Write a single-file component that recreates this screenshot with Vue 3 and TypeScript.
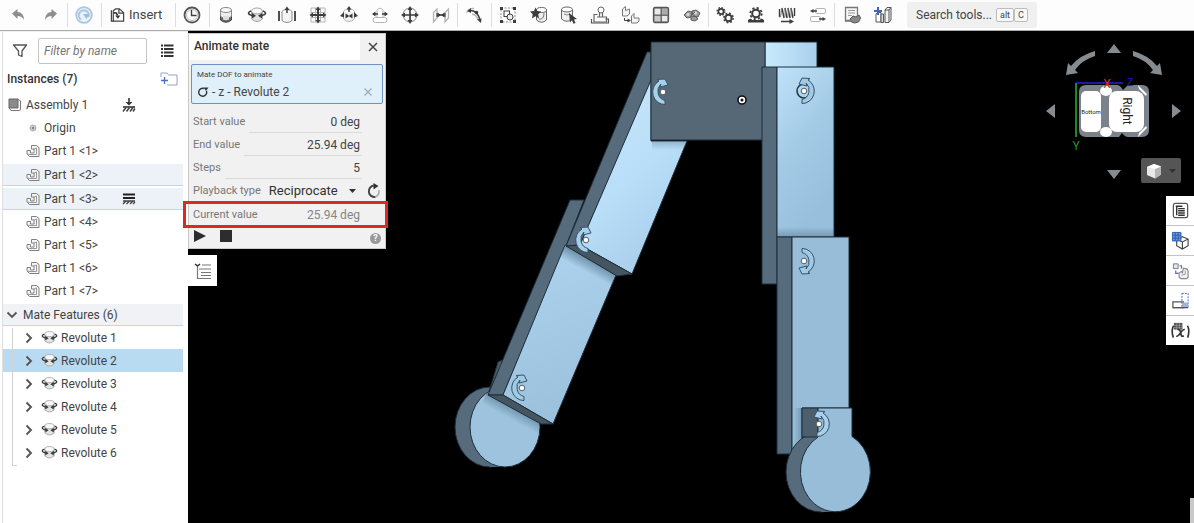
<script setup lang="ts">
import { ref } from 'vue'

interface Tool {
  label: string
  art: string
}
interface ToolGroup {
  kind: string
  tools: Tool[]
}

const D = '#3c3c3c'
const G = '#8b8b8b'
const L = '#b4b4b4'

const revoluteArt = `<path d="M4.500 6v8q5.500 5 11 0V6" fill="#e2e2e2" stroke="#a4a4a4"/><ellipse cx="10" cy="6" rx="5.500" ry="3" fill="#fafafa" stroke="#a4a4a4"/><path d="M6 10.500Q1.500 10 1.500 8Q2 6.500 4 6M14 10.500Q18.500 10 18.500 8Q18 6.500 16 6" fill="none" stroke="${D}" stroke-width="1.500"/><path d="M5 8L9 10.800L5 13.500zM15 8L11 10.800L15 13.500z" fill="${D}"/>`

const toolGroups: ToolGroup[] = [
  {
    kind: 'clock',
    tools: [
      { label: 'Named positions', art: `<circle cx="10" cy="10" r="7.500" fill="#fff" stroke="#555" stroke-width="1.800"/><circle cx="10" cy="10" r="5.500" fill="none" stroke="#bbb"/><path d="M9.500 5v5.500h5" fill="none" stroke="${D}" stroke-width="1.400"/>` },
    ],
  },
  {
    kind: 'mates',
    tools: [
      { label: 'Fastened mate', art: `<path d="M4.500 9v6q5.500 4.500 11 0V9" fill="#666" stroke="#444"/><path d="M4.500 5v6q1 1.500 2.500 1.800q3 1.200 6 0q2-.5 2.500-1.800V5" fill="#eee" stroke="#888"/><path d="M7 11v3.500q3 1.500 6 0V11" fill="#ddd"/><ellipse cx="10" cy="5" rx="5.500" ry="2.500" fill="#fafafa" stroke="#888"/>` },
      { label: 'Revolute mate', art: revoluteArt },
      { label: 'Slider mate', art: `<ellipse cx="10" cy="7" rx="5" ry="2.300" fill="#fff" stroke="${G}"/><path d="M5 7v8.500q5 4 10 0V7" fill="#f4f4f4" stroke="${G}"/><path d="M2 6v10M18 6v10" stroke="${D}" stroke-width="1.800"/><path d="M10 8V3" stroke="${D}" stroke-width="1.500"/><path d="M7.500 5L10 1.500L12.500 5z" fill="${D}"/>` },
      { label: 'Planar mate', art: `<path d="M3 3h14v14H3zM3 7.500h14M3 12.500h14M7.500 3v14M12.500 3v14" fill="none" stroke="${L}"/><path d="M10 4v12M4 10h12" stroke="${D}" stroke-width="2"/><path d="M10 1.500L7.500 5h5zM10 18.500L7.500 15h5zM1.500 10L5 7.500v5zM18.500 10L15 7.500v5z" fill="${D}"/>` },
      { label: 'Cylindrical mate', art: `<ellipse cx="10" cy="7" rx="5.500" ry="3" fill="#fff" stroke="${L}"/><path d="M4.500 7v7q5.500 5 11 0V7" fill="#f2f2f2" stroke="${L}"/><path d="M10 7V3" stroke="${D}" fill="none" stroke-width="1.500"/><path d="M10 1L7.500 4.500h5zM1 11L5 7v5.500zM19 11L15 7v5.500z" fill="${D}"/><path d="M10.500 11L6.500 8.500v5zM9.500 11l4-2.500v5z" fill="${D}"/>` },
      { label: 'Pin slot mate', art: `<path d="M7 13V5q3-3.500 6 0v8" fill="#fff" stroke="${L}"/><rect x="3" y="12.500" width="14" height="5" rx="2.500" fill="none" stroke="${L}"/><path d="M3 9h5M12 9h5" stroke="${D}" stroke-width="1.500"/><path d="M2 9l3.500-2.500v5zM18 9l-3.500-2.500v5z" fill="${D}"/>` },
      { label: 'Ball mate', art: `<circle cx="10" cy="10" r="7" fill="#f7f7f7" stroke="${G}"/><path d="M10 3.500v13M3.500 10h13" stroke="${D}" stroke-width="1.700"/><path d="M10 1L7.500 5h5zM10 19l-2.500-4h5zM1 10l4-2.500v5zM19 10l-4-2.500v5z" fill="${D}"/>` },
      { label: 'Parallel mate', art: `<path d="M2.500 7.500L6 4v9l-3.500 4zM17.500 4L14 7.500V17l3.500-4z" fill="#fafafa" stroke="${L}" stroke-width="1.300"/><path d="M6 10h8" stroke="${D}" stroke-width="1.500"/><path d="M10 10L6.500 7.500v5zM10 10l3.500-2.500v5z" fill="${D}"/><path d="M6 8v4M14 8v4" stroke="${D}"/>` },
    ],
  },
  {
    kind: 'tangent',
    tools: [
      { label: 'Tangent mate', art: `<path d="M2.500 8Q5 3 10 3.500M8 9q5 1 6 6" fill="none" stroke="${L}" stroke-width="1.300"/><path d="M5 5.500q8-1 11 9" fill="none" stroke="${D}" stroke-width="1.500"/><path d="M3 6l4-3v5zM17 18l-4-3.500 4.500-1z" fill="${D}"/><circle cx="12.500" cy="7.500" r="1.800" fill="${D}"/>` },
    ],
  },
  {
    kind: 'assembly',
    tools: [
      { label: 'Group', art: `<rect x="3" y="3" width="14" height="14" fill="none" stroke="${G}" stroke-dasharray="2 1.500"/><path d="M2 2h3v3H2zM15 2h3v3h-3zM2 15h3v3H2zM15 15h3v3h-3z" fill="${D}"/><rect x="6" y="6" width="5.500" height="5.500" fill="#fff" stroke="${D}"/><circle cx="12" cy="12" r="3" fill="#eee" stroke="${D}"/>` },
      { label: 'Mate connector', art: `<path d="M7.500 5v10q5 4.500 10 0V5" fill="#eee" stroke="#666"/><ellipse cx="12.500" cy="5" rx="5" ry="2.500" fill="#fff" stroke="#666"/><path d="M10 14q5 1 5-6" fill="none" stroke="#777"/><path d="M6.500 2.500l1.700 3.500 4 .5-3 2.700.8 4.300-3.500-2.200L3 13.500l.7-4.300L1 6.500 5 6z" fill="${D}"/>` },
      { label: 'Replicate', art: `<path d="M2.500 4.500v9.500q5.500 4.500 11 0V4.500" fill="#f2f2f2" stroke="#666"/><ellipse cx="8" cy="4.500" rx="5.500" ry="2.500" fill="#fff" stroke="#666"/><path d="M5 9q3 2 6 0" fill="none" stroke="#888"/><path d="M10 8l8 6-3 .5 1.500 3.500-2 .8-1.500-3.500L11 17.500z" fill="${D}"/>` },
      { label: 'Snap mode', art: `<circle cx="11" cy="5" r="3" fill="#fff" stroke="#666"/><path d="M9.500 8v4M12.500 8v4M7 12h9.500v5H4V9.500h3.500" fill="none" stroke="#666" stroke-width="1.200"/><path d="M1.500 14v4h17v-4h-3" fill="none" stroke="#555" stroke-width="1.200"/>` },
      { label: 'Move part', art: `<path d="M1.500 4l3-2.500v4l4-1.500v5l-2.500 2H1.500z" fill="#f5f5f5" stroke="#777" stroke-linejoin="round"/><path d="M10.500 11l2.500-2.500v4.500H18v3l-2 2h-5.500z" fill="#f5f5f5" stroke="#777" stroke-linejoin="round"/><path d="M3.500 13v2.500H7" fill="none" stroke="${D}"/><path d="M10 15.500l-3.500-2v4z" fill="${D}"/>` },
      { label: 'Display states', art: `<rect x="2.500" y="2.500" width="15" height="15" rx="1.500" fill="#aaa" stroke="#555" stroke-width="1.300"/><path d="M4 4h5.500v5.500H4zM11 11h5v5h-5z" fill="#e9e9e9"/><path d="M4 11h5.500v5H4z" fill="#c9c9c9"/><path d="M10.200 3v14M3 10.200h14" stroke="#555"/>` },
      { label: 'Pattern', art: `<path d="M2 10l4-4 4 1-1 5-4 1zM10 6l4-1 4 3-2 4-5-1zM9 12l4-1 3 3-3 2-4-1z" fill="#9b9b9b" stroke="#5e5e5e"/><circle cx="6" cy="9.500" r="1.500" fill="#ddd"/><circle cx="13.500" cy="8" r="1.500" fill="#ddd"/><path d="M7 13l6-6" stroke="#666"/>` },
    ],
  },
  {
    kind: 'relations',
    tools: [
      { label: 'Gear relation', art: `<circle cx="6" cy="6.500" r="2.600" fill="#fff" stroke="${D}" stroke-width="1.700"/><circle cx="6" cy="6.500" r="3.900" fill="none" stroke="${D}" stroke-width="1.300" stroke-dasharray="1.500 1.560"/><circle cx="13.500" cy="13" r="3.200" fill="#fff" stroke="${D}" stroke-width="2"/><circle cx="13.500" cy="13" r="4.700" fill="none" stroke="${D}" stroke-width="1.500" stroke-dasharray="1.800 1.890"/>` },
      { label: 'Rack and pinion', art: `<circle cx="10" cy="8.500" r="3.800" fill="#fff" stroke="${D}" stroke-width="2"/><circle cx="10" cy="8.500" r="5.700" fill="none" stroke="${D}" stroke-width="1.800" stroke-dasharray="2.200 2.270"/><path d="M2 17.500v-2.500l2.500-1.500 2 1.500h7l2-1.500 2.500 1.500v2.500z" fill="${D}"/>` },
      { label: 'Screw relation', art: `<path d="M2.500 4v8M5 3l2 10M8 3l2 10M11 3l2 10M14 3l2 10M17.500 3v8" stroke="${D}" stroke-width="1.400"/><path d="M2.500 12q1 2 2.500-9M7 13q1.500 0 1-10M10 13q1.500 0 1-10M13 13q1.500 0 1-10" fill="none" stroke="#777"/><path d="M4 16.500h9" stroke="${D}" stroke-width="1.500"/><path d="M17 16.500L12.500 14v5z" fill="${D}"/>` },
      { label: 'Linear relation', art: `<rect x="7.500" y="3.500" width="10" height="5" rx="1.500" fill="#fff" stroke="${L}"/><rect x="2.500" y="11.500" width="10" height="5" rx="1.500" fill="#fff" stroke="${L}"/><path d="M4 6h5M11 14h5" stroke="${D}" stroke-width="1.400"/><path d="M2 6l3.500-2v4zM18 14l-3.500-2v4z" fill="${D}"/>` },
    ],
  },
  {
    kind: 'last',
    tools: [
      { label: 'Bill of materials', art: `<path d="M3.500 2.500h12v13h-12z" fill="#f6f6f6" stroke="#777" stroke-width="1.300"/><path d="M6 5.500h7M6 8h7M6 10.500h4" stroke="#999"/><path d="M8 14l3-3 3 1 3-2 1.500 3-2 4-4 1-3-1z" fill="#888" stroke="#555"/><path d="M3 16h6" stroke="#777" stroke-width="1.500"/>` },
      { label: 'Exploded view', art: `<path d="M3 9l1.500-1.500H8V17H3z" fill="#fff" stroke="#555"/><path d="M8 9h2.500v8.500H8z" fill="#ddd" stroke="#555"/><path d="M12 5l2-2.500h4V15l-2 2.500h-4zM12 5h4v12M16 5l2-2.500" fill="#f4f4f4" stroke="#555"/><path d="M5 2v8M1 6h8" stroke="#3f67b5" stroke-width="2"/>` },
    ],
  },
]

const parts = [
  { name: 'Part 1 <1>' },
  { name: 'Part 1 <2>', hot: true },
  { name: 'Part 1 <3>', hot: true, fixed: true },
  { name: 'Part 1 <4>' },
  { name: 'Part 1 <5>' },
  { name: 'Part 1 <6>' },
  { name: 'Part 1 <7>' },
]
const mates = ['Revolute 1', 'Revolute 2', 'Revolute 3', 'Revolute 4', 'Revolute 5', 'Revolute 6']
const selectedMate = ref('Revolute 2')

const filterText = ref('')
const startValue = ref('0 deg')
const endValue = ref('25.94 deg')
const steps = ref('5')
const playback = ref('Reciprocate')
const currentValue = ref('25.94 deg')

const sideTabs: Tool[] = [
  { label: 'Configurations', art: `<rect x="2.500" y="2.500" width="15" height="15" rx="2" fill="#fff" stroke="#555" stroke-width="1.300"/><path d="M5 5.500h7M7.500 8h7M7.500 10.300h7M7.500 12.600h7M7.500 15h7M6 6v9" stroke="#333" stroke-width="1.500"/>` },
  { label: 'Appearance', art: `<path d="M12 6l6 2.500v7L12 19l-6-3.500v-7zM6 8.500l6 3 6-3M12 11.500V19" fill="#fff" stroke="#444" stroke-width="1.200"/><path d="M1.500 1.500h9v9h-9z" fill="#6b95dd" stroke="#2e5fae"/><path d="M4.500 1.500v9M7.500 1.500v9M1.500 4.500h9M1.500 7.500h9" stroke="#2e5fae"/>` },
  { label: 'Part list', art: `<path d="M2.500 3h5v5h-5z" fill="#e4e8f2" stroke="#778"/><path d="M5 10v3h3M9 5h2v3" fill="none" stroke="#4a74c0" stroke-width="1.300"/><path d="M8.500 12.500l2.500-1.500 1 1.500 1-5 4 1 1 2v6.500l-1.500 1.500h-6l-2-1.500z" fill="#f2f2f2" stroke="#888" stroke-width="1.200"/><path d="M11 15l4-1v-4" fill="none" stroke="#999"/>` },
  { label: 'Measure', art: `<path d="M2 11.500h11v6H2z" fill="#fff" stroke="#555" stroke-width="1.300"/><path d="M11.500 2.500H18v15h-6.500z" fill="none" stroke="#3f67b5" stroke-dasharray="2 1.200"/><path d="M12 12h6v5.500h-6z" fill="#9fb4d8"/><path d="M2 17.500h16" stroke="#555" stroke-width="1.300"/>` },
  { label: 'Variables', art: `<path d="M3 2h9v7H3z" fill="#555"/><path d="M3 4.500h9M3 7h9M6 2v7M9 2v7" stroke="#aaa" stroke-width=".6"/><path d="M2.500 5q-2.500 6 0 12.500M17.500 5q2.500 6 0 12.500M7 9.500q2-1.500 2.800 1.500l1 4q.5 2 2.700.5M14.500 9q-2-.5-4.500 3.500t-4.500 3.500" fill="none" stroke="#333" stroke-width="1.700"/>` },
]

const markers = [
  { x: 663, y: 92, t: '', open: false },
  { x: 586, y: 240, t: '', open: false },
  { x: 522, y: 388, t: '', open: true },
  { x: 804, y: 91, t: 'scale(-1 1)', open: true },
  { x: 804, y: 261, t: 'rotate(180)', open: true },
  { x: 819, y: 424, t: 'scale(-1 1)', open: false },
]
</script>

<template>
  <div class="app">
    <header class="toolbar">
      <div class="group group--history">
        <button class="tool" type="button" aria-label="Undo">
          <svg viewBox="0 0 20 20"><path d="M4 8.500L9.500 4v3q6 0 6.500 8-2-4-6.500-4v3z" fill="#8e8e8e" /></svg>
        </button>
        <button class="tool" type="button" aria-label="Redo">
          <svg viewBox="0 0 20 20"><path d="M16 8.500L10.500 4v3q-6 0-6.500 8 2-4 6.500-4v3z" fill="#8e8e8e" /></svg>
        </button>
      </div>
      <div class="group group--single">
        <button class="tool" type="button" aria-label="Update">
          <svg viewBox="0 0 20 20">
            <circle cx="10" cy="10" r="7.800" fill="#e9f1f9" stroke="#a9c6e2" stroke-width="1.800" />
            <path d="M7 14.500a5 5 0 1 1 7.500-2.500" fill="none" stroke="#a9c6e2" stroke-width="2" />
            <path d="M9 9h6.500l-3 5z" fill="#9bbddd" />
          </svg>
        </button>
      </div>
      <div class="group group--insert">
        <button class="insert" type="button">
          <svg class="insert-icon" viewBox="0 0 16 16">
            <path d="M3.500 3.500L6 1.500h4l4.500 4v9h-11zM9.500 2v4h5" fill="#fff" stroke="#444" stroke-width="1.300" />
            <path d="M1.500 3v11.500H4" fill="none" stroke="#444" stroke-width="1.300" />
            <path d="M4 6q3-1.500 4 2.500" fill="none" stroke="#333" stroke-width="1.800" />
            <path d="M8.500 12L5.500 8.500H11z" fill="#333" />
          </svg>
          Insert
        </button>
      </div>
      <div v-for="g in toolGroups" :key="g.kind" class="group" :class="'group--' + g.kind">
        <button v-for="t in g.tools" :key="t.label" class="tool" type="button" :aria-label="t.label">
          <svg viewBox="0 0 20 20" v-html="t.art"></svg>
        </button>
      </div>
      <button class="search" type="button">Search tools... <kbd>alt</kbd><kbd>C</kbd></button>
    </header>

    <div class="workspace">
      <aside class="sidebar">
        <div class="filter">
          <svg class="funnel" viewBox="0 0 16 16"><path d="M1.500 2h13L10 8v5.500L6.500 12V8z" fill="#fff" stroke="#555" stroke-width="1.300" stroke-linejoin="round" /></svg>
          <input v-model="filterText" type="text" placeholder="Filter by name" aria-label="Filter by name" />
          <button class="plain" type="button" aria-label="List options">
            <svg class="i14" viewBox="0 0 14 14"><path d="M1 1.500h2M1 5h2M1 8.500h2M1 12h2M4 1.500h9.500M4 5h9.500M4 8.500h9.500M4 12h9.500" stroke="#333" stroke-width="1.800" /></svg>
          </button>
        </div>
        <div class="instances">
          <h2>Instances (7)</h2>
          <button class="plain" type="button" aria-label="New folder">
            <svg class="folder" viewBox="0 0 18 14"><path d="M1 5V1h6l1.500 2H17v10H7" fill="#fff" stroke="#93a3c4" /><path d="M4.500 5v7M1 8.500h7" stroke="#4a6fc4" stroke-width="1.300" /></svg>
          </button>
        </div>
        <ul class="tree">
          <li class="row row--root">
            <svg class="i14" viewBox="0 0 14 14"><path d="M1 1h9v9H1z" fill="#8a8a8a" stroke="#666" /><path d="M3 12.500h8q1.500 0 1.500-1.500V3M10 1l3 2.500M1 10l2.500 3" fill="none" stroke="#777" /></svg>
            <span class="name">Assembly 1</span>
            <svg class="state" viewBox="0 0 14 16"><path d="M7 1v5" stroke="#333" stroke-width="1.600" /><path d="M7 8.500L3.500 5h7z" fill="#333" /><path d="M1 10h12" stroke="#333" stroke-width="1.600" /><path d="M1 14.500l3-4M4.500 14.500l3-4M8 14.500l3-4M11 14.500l2-3" stroke="#444" stroke-width="1.500" /></svg>
          </li>
          <li class="row row--origin">
            <svg class="i14" viewBox="0 0 14 14"><circle cx="7" cy="7" r="3" fill="#ddd" stroke="#aaa" /><circle cx="7" cy="7" r="1.500" fill="#888" /></svg>
            <span class="name">Origin</span>
          </li>
          <li v-for="p in parts" :key="p.name" class="row row--part" :class="{ 'row--hot': p.hot }">
            <svg class="i14" viewBox="0 0 14 14"><path d="M5.500 5V1.500h5l2.500 2v9H3.500L1 10V6.500h3.500V9h3.500V5z" fill="#f6f6f6" stroke="#808080" stroke-linejoin="round" /><path d="M8 5l2.500-1M10.500 4v6.500H4M1 10l3 .5" fill="none" stroke="#999" /></svg>
            <span class="name">{{ p.name }}</span>
            <svg v-if="p.fixed" class="state" viewBox="0 0 14 16"><path d="M1 3.500h12M1 7h12" stroke="#222" stroke-width="2.200" /><path d="M1 13l3-3M4.500 13l3-3M8 13l3-3M11 13l2-2M1 10h12" stroke="#444" stroke-width="1.300" /></svg>
          </li>
          <li class="row row--section row--hot">
            <svg class="chev" viewBox="0 0 12 12"><path d="M1.500 3.500L6 8l4.500-4.500" fill="none" stroke="#555" stroke-width="1.800" /></svg>
            <span class="name">Mate Features (6)</span>
          </li>
        </ul>
        <ul class="tree tree--mates">
          <li v-for="m in mates" :key="m" class="row row--mate" :class="{ 'row--selected': m === selectedMate }" @click="selectedMate = m">
            <svg class="chev" viewBox="0 0 12 12"><path d="M3.500 1.500L8 6l-4.500 4.500" fill="none" stroke="#555" stroke-width="1.900" /></svg>
            <svg class="mate" viewBox="0 0 20 20" v-html="revoluteArt"></svg>
            <span class="name">{{ m }}</span>
          </li>
        </ul>
      </aside>

      <main class="viewport">
        <svg class="scene" viewBox="188 31 1006 492" preserveAspectRatio="xMidYMid meet" role="img" aria-label="Walking mechanism model">
          <defs>
            <linearGradient id="thigh" x1="0" y1="0" x2=".5" y2="1"><stop offset="0" stop-color="#c9e9fd" /><stop offset=".6" stop-color="#b9def8" /><stop offset="1" stop-color="#a9cfeb" /></linearGradient>
            <linearGradient id="shin" x1="0" y1="0" x2=".2" y2="1"><stop offset="0" stop-color="#aed4ef" /><stop offset="1" stop-color="#9cc1dc" /></linearGradient>
            <linearGradient id="right" x1="0" y1="0" x2=".4" y2="1"><stop offset="0" stop-color="#bfe2f8" /><stop offset=".5" stop-color="#a4cbe6" /><stop offset="1" stop-color="#98bfdb" /></linearGradient>
            <linearGradient id="top" x1="0" y1="0" x2="1" y2="0"><stop offset="0" stop-color="#c9eafd" /><stop offset="1" stop-color="#a8d0ec" /></linearGradient>
            <linearGradient id="drop" x1="0" y1="0" x2="0" y2="1"><stop offset="0" stop-color="#36536a" stop-opacity=".5" /><stop offset="1" stop-color="#36536a" stop-opacity="0" /></linearGradient>
            <linearGradient id="rise" x1="0" y1="1" x2="0" y2="0"><stop offset="0" stop-color="#36536a" stop-opacity=".35" /><stop offset="1" stop-color="#36536a" stop-opacity="0" /></linearGradient>
            <linearGradient id="side" x1="1" y1="0" x2="0" y2="0"><stop offset="0" stop-color="#36536a" stop-opacity=".35" /><stop offset="1" stop-color="#36536a" stop-opacity="0" /></linearGradient>
            <linearGradient id="dropLeg" gradientUnits="userSpaceOnUse" x1="590" y1="260" x2="584" y2="271"><stop offset="0" stop-color="#36536a" stop-opacity=".5" /><stop offset="1" stop-color="#36536a" stop-opacity="0" /></linearGradient>
            <linearGradient id="dropFoot" gradientUnits="userSpaceOnUse" x1="518" y1="409" x2="512" y2="420"><stop offset="0" stop-color="#36536a" stop-opacity=".45" /><stop offset="1" stop-color="#36536a" stop-opacity="0" /></linearGradient>
            <clipPath id="footClip"><ellipse cx="505" cy="427" rx="35" ry="40" /></clipPath>
          </defs>
          <g stroke="#1d2e3c" stroke-linejoin="round">
            <ellipse cx="490" cy="427" rx="35" ry="40" fill="#566b7b" />
            <path d="M490 467h15v-40h-15z" fill="#566b7b" stroke="none" />
            <path d="M498 362l4-2v30l-14 5z" fill="#4a5d6b" />
            <ellipse cx="505" cy="427" rx="35" ry="40" fill="#9dc3de" />
            <path d="M487 392l60 32-6 14-60-32z" fill="url(#dropFoot)" stroke="none" clip-path="url(#footClip)" />
            <path d="M570 200h14l-18 46-63 149h-15z" fill="#566b7b" />
            <path d="M565 245l51 30-63 149-50-29z" fill="url(#shin)" />
            <path d="M565 245l51 30-5 12-51-30z" fill="url(#dropLeg)" stroke="none" />
            <path d="M488 395h15l50 29h-12z" fill="#465661" />
            <path d="M647 52h4v30l-71 163-14 1z" fill="#566b7b" />
            <path d="M651 80v61h36l-55 133-52-29z" fill="url(#thigh)" />
            <path d="M566 246l14-1 52 29-15 2z" fill="#465661" />
            <path d="M652 141h35l-4 9h-31z" fill="url(#drop)" stroke="none" opacity=".6" />
            <path d="M765 42h52v26h-52z" fill="url(#top)" />
            <path d="M651 42h114v98H651z" fill="#566775" />
            <path d="M762 67h15v217h-15z" fill="#566b7b" />
            <path d="M777 67h57v170h-57z" fill="url(#right)" />
            <path d="M777 237v-10h57v10z" fill="url(#rise)" stroke="none" />
            <path d="M777 237h15v217h-15z" fill="#566b7b" />
            <path d="M792 237h57v171h-47v32l-10 14z" fill="#98bdd8" />
            <path d="M794 408h8v32l-8 10z" fill="url(#side)" stroke="none" />
            <ellipse cx="821" cy="472" rx="35" ry="40" fill="#566b7b" />
            <path d="M821 512h15v-40h-15z" fill="#566b7b" stroke="none" />
            <path d="M802 408h16v29h-16z" fill="#4c5f6d" />
            <path d="M818 408h34v28.500A35 40 0 1 1 818 437z" fill="#98bdd8" />
          </g>
          <circle cx="804" cy="91" r="7" fill="none" stroke="#22343f" stroke-width="1.500" />
          <g v-for="(m, i) in markers" :key="i" :transform="`translate(${m.x} ${m.y})`">
            <path :transform="m.t" d="M2 -13L5 -7L-3 -5L-2 -8A9 9.500 0 0 0 2 8.500V12.500A12 12.500 0 0 1 -4 -11L-6 -12.500z" :fill="m.open ? '#a3c9e4' : '#a9d0ea'" stroke="#34546c" />
            <circle r="2.800" fill="#fff" stroke="#555f68" />
          </g>
          <circle cx="742" cy="100" r="4" fill="#fff" stroke="#111" stroke-width="1.600" />
          <circle cx="742" cy="100" r="1.500" fill="#111" />
        </svg>

        <section class="panel" aria-label="Animate mate">
          <div class="panel-head">
            <h2>Animate mate</h2>
            <button class="close" type="button" aria-label="Close">
              <svg viewBox="0 0 10 10"><path d="M1 1l8 8M9 1L1 9" stroke="#444" stroke-width="1.500" /></svg>
            </button>
          </div>
          <div class="dof">
            <span class="dof-label">Mate DOF to animate</span>
            <div class="dof-value">
              <svg viewBox="0 0 12 12"><path d="M7 2.500A4 4 0 1 0 9.500 5" fill="none" stroke="#333" stroke-width="1.400" /><path d="M6.500 1.500h5L9 5z" fill="#333" /></svg>
              <span>- z - Revolute 2</span>
              <button class="clear" type="button" aria-label="Remove Revolute 2">
                <svg viewBox="0 0 10 10"><path d="M1.500 1.500l7 7M8.500 1.500l-7 7" stroke="#9aabb8" stroke-width="1.200" /></svg>
              </button>
            </div>
          </div>
          <div class="fields">
            <div class="field"><label for="start">Start value</label><input id="start" v-model="startValue" type="text" /></div>
            <div class="field"><label for="end">End value</label><input id="end" v-model="endValue" type="text" /></div>
            <div class="field"><label for="steps">Steps</label><input id="steps" v-model="steps" type="text" /></div>
            <div class="field field--select">
              <label for="playback">Playback type</label>
              <div class="select">
                <select id="playback" v-model="playback">
                  <option>Reciprocate</option>
                  <option>Loop</option>
                  <option>Once</option>
                </select>
                <svg class="caret" viewBox="0 0 8 8"><path d="M0 2h7L3.500 6z" fill="#333" /></svg>
              </div>
              <button class="loop" type="button" aria-label="Reverse direction">
                <svg viewBox="0 0 16 16"><path d="M9 2.500A5.800 5.800 0 1 0 10.500 14" fill="none" stroke="#444" stroke-width="2" /><path d="M10.500 14q4-2 3.500-7" fill="none" stroke="#aaa" stroke-width="1.500" /><path d="M8.500 0l5 3-5 3.500z" fill="#333" /></svg>
              </button>
            </div>
            <div class="field field--current"><label for="current">Current value</label><input id="current" v-model="currentValue" type="text" readonly /></div>
          </div>
          <div class="playbar">
            <button type="button" aria-label="Play"><svg viewBox="0 0 12 12"><path d="M0 0l12 6-12 6z" fill="#2d2d2d" /></svg></button>
            <button type="button" aria-label="Stop"><svg viewBox="0 0 12 12"><path d="M0 0h12v12H0z" fill="#2d2d2d" /></svg></button>
            <button class="help" type="button" aria-label="Help">?</button>
          </div>
        </section>

        <button class="tree-toggle" type="button" aria-label="Toggle feature list">
          <svg viewBox="0 0 18 18"><path d="M1 2l2.500 2L6 2" fill="none" stroke="#333" stroke-width="1.600" /><path d="M8 3h9M5 7h12M7 10.500h10M7 13.500h10M3 16.500h14M3.500 5v11.500" stroke="#777" stroke-width="1.200" /></svg>
        </button>

        <svg class="cube" viewBox="1040 36 154 150" role="img" aria-label="View cube">
          <g fill="#868b90">
            <path d="M1107 53l7-9 7 9zM1107 170l7 9 7-9zM1055 104v14l-9-7zM1172 104v14l9-7z" />
            <path d="M1095 51v5q-13 4-20 14l3 3-12 2 2-12 3 3q9-11 24-15zM1133 51v5q13 4 20 14l-3 3 12 2-2-12-3 3q-9-11-24-15z" />
          </g>
          <path d="M1086 85h31q3 0 6 5l4-4q2-1 5-1h10q7 0 7 7v38q0 7-7 7h-14q-3 0-6-4l-3 4h-33q-7 0-7-7V92q0-7 7-7z" fill="#7b828b" />
          <g fill="#fff">
            <rect x="1081" y="91" width="20" height="41" rx="5" />
            <rect x="1109" y="91" width="35" height="41" rx="8" />
            <ellipse cx="1106" cy="91" rx="6" ry="5" />
            <ellipse cx="1106" cy="132" rx="6" ry="5" />
            <path d="M1138 85l9 9-1 2-7-7zM1138 137l9-9-1-2-7 7z" />
          </g>
          <path d="M1076 83h47" stroke="#1a1aa8" stroke-width="2" />
          <path d="M1076 83v54" stroke="#1c8a1c" stroke-width="2" />
          <g font-family="Roboto, sans-serif" text-anchor="middle">
            <text x="1091" y="114" font-size="6" fill="#222">Bottom</text>
            <text transform="translate(1123 111) rotate(90)" font-size="12" fill="#222">Right</text>
            <text x="1107" y="88" font-size="12" fill="#e02b2b">X</text>
            <text x="1130" y="86" font-size="11" fill="#1a1ac0">Z</text>
            <text x="1076" y="150" font-size="12" fill="#239523">Y</text>
          </g>
        </svg>
        <button class="view-menu" type="button" aria-label="View options">
          <svg class="box" viewBox="0 0 16 16"><path d="M1 4l7-3 7 2.500v8L9 15.500 1 12z" fill="#e8e8e8" /><path d="M9 6l6-2.500v8L9 15.500z" fill="#b5b5b5" /><path d="M1 4l7-3 7 2.500L9 6z" fill="#fff" /></svg>
          <svg class="caret" viewBox="0 0 8 8"><path d="M0 2h7L3.500 6z" fill="#333" /></svg>
        </button>

        <nav class="side-tabs" aria-label="Panels">
          <button v-for="s in sideTabs" :key="s.label" type="button" :aria-label="s.label">
            <svg viewBox="0 0 20 20" v-html="s.art"></svg>
          </button>
        </nav>
        <div class="scroll-corner"></div>
      </main>
    </div>
  </div>
</template>

<style>
body {
  background: #fff;
}
</style>

<style scoped>
.app {
  display: flex;
  flex-direction: column;
  height: 100vh;
  overflow: hidden;
  font-family: Roboto, "Liberation Sans", sans-serif;
  font-size: 12px;
  line-height: 16px;
  color: #444;
}
.app *,
.app *::before {
  box-sizing: border-box;
}
button {
  font: inherit;
  color: inherit;
  padding: 0;
  margin: 0;
  border: 0;
  background: none;
  display: flex;
  align-items: center;
  justify-content: center;
  cursor: pointer;
}
svg {
  display: block;
  flex: none;
}
h2 {
  margin: 0;
  font-size: 12px;
  font-weight: 500;
  color: #333;
}
ul {
  list-style: none;
  margin: 0;
  padding: 0;
}

.toolbar {
  flex: none;
  display: flex;
  align-items: center;
  height: 31px;
  padding-left: 3px;
  background: #fdfdfd;
  border-bottom: 1px solid #a9adad;
}
.group {
  flex: none;
  display: flex;
  align-items: center;
  justify-content: space-between;
  height: 24px;
  padding: 0 6px;
  border-right: 1px solid #dcdcdc;
}
.group--history {
  width: 65px;
  padding-left: 5px;
}
.group--single,
.group--clock,
.group--tangent {
  width: 34px;
}
.group--insert {
  width: 74px;
}
.group--mates {
  width: 248px;
}
.group--assembly {
  width: 217px;
}
.group--relations {
  width: 126px;
}
.group--last {
  width: 70px;
  padding: 0 12px 0 7px;
  border-right: 0;
}
.tool,
.tool svg {
  width: 20px;
  height: 20px;
}
.insert {
  gap: 4px;
  padding-left: 2px;
  font-size: 13px;
}
.insert-icon {
  width: 15px;
  height: 16px;
}
.search {
  flex: none;
  height: 26px;
  width: 130px;
  margin-left: 2px;
  border-radius: 3px;
  background: #f0f0f0;
  font-size: 12px;
}
kbd {
  font-family: inherit;
  font-size: 9px;
  line-height: 12px;
  padding: 0 3px;
  border: 1px solid #bdbdbd;
  border-radius: 2px;
  background: #f8f8f8;
}
kbd:first-of-type {
  margin-left: 4px;
}

.workspace {
  flex: 1;
  min-height: 0;
  display: flex;
}
.sidebar {
  flex: none;
  width: 188px;
  padding: 6px 5px 0 3px;
  background: #fff;
  border-top: 1px solid #eee;
  position: relative;
}
.sidebar::before {
  content: "";
  position: absolute;
  left: 2px;
  top: 0;
  bottom: 0;
  width: 1px;
  background: #dedede;
}
.filter {
  display: flex;
  align-items: center;
  height: 26px;
  padding: 0 9px 0 9px;
}
.funnel {
  width: 16px;
  height: 16px;
}
.filter input {
  flex: 1;
  min-width: 0;
  height: 26px;
  margin: 0 13px 0 10px;
  padding: 0 5px;
  border: 1px solid #c4c4c4;
  border-radius: 2px;
  font: italic 12px/16px Roboto, sans-serif;
  color: #444;
}
.filter input::placeholder {
  color: #777;
}
.i14 {
  width: 14px;
  height: 14px;
}
.instances {
  display: flex;
  align-items: center;
  justify-content: space-between;
  height: 29px;
  padding: 0 5px 0 4px;
}
.folder {
  width: 18px;
  height: 14px;
}
.row {
  display: flex;
  align-items: center;
  height: 23px;
  white-space: pre;
}
.row--root {
  padding-left: 5px;
  gap: 4px;
}
.row--root .name {
  width: 92px;
}
.row--origin,
.row--part {
  padding-left: 23px;
  gap: 4px;
}
.row--part .name {
  width: 74px;
}
.state {
  width: 14px;
  height: 16px;
}
.row--hot {
  height: 24px;
  border-top: 2px solid #fff;
  border-bottom: 1px solid #b9d9ee;
  background: #ecf2f7;
}
.row--section {
  gap: 5px;
  padding-left: 3px;
  background: #f0f2f5;
}
.chev {
  width: 12px;
  height: 12px;
}
.tree--mates {
  position: relative;
  padding-bottom: 2px;
}
.tree--mates::before {
  content: "";
  position: absolute;
  left: 9px;
  top: 2px;
  bottom: 0;
  width: 5px;
  border-left: 1px solid #d2d2d2;
  border-bottom: 1px solid #d2d2d2;
}
.row--mate {
  padding-left: 20px;
  cursor: pointer;
}
.mate {
  width: 17px;
  height: 17px;
  margin: 0 3px 0 6px;
}
.row--selected {
  background: #b9dbf2;
}

.viewport {
  flex: 1;
  min-width: 0;
  position: relative;
  background: #000;
}
.scene {
  position: absolute;
  inset: 0;
  width: 100%;
  height: 100%;
}
.panel {
  position: absolute;
  left: 0;
  top: 2px;
  width: 198px;
  background: #f1f1f1;
  border: 1px solid #c9c9c9;
}
.panel-head {
  display: flex;
  height: 26px;
  background: #fff;
}
.panel-head h2 {
  flex: 1;
  padding: 4px 5px;
}
.close {
  width: 25px;
  background: #f1f1f1;
}
.close svg,
.clear svg {
  width: 10px;
  height: 10px;
}
.dof {
  margin: 4px 2px 0;
  height: 40px;
  padding: 4px 9px 0 5px;
  border: 1px solid #6d93c4;
  border-radius: 2px;
  background: #dff0fa;
}
.dof-label {
  display: block;
  font-size: 8px;
  line-height: 12px;
}
.dof-value {
  display: flex;
  align-items: center;
  height: 22px;
}
.dof-value > svg {
  width: 12px;
  height: 12px;
  margin-right: 3px;
}
.clear {
  margin-left: auto;
}
.fields {
  padding: 6px 0 0 4px;
}
.field {
  position: relative;
  display: flex;
  align-items: center;
  height: 23px;
  padding-right: 23px;
}
.field label {
  color: #777;
  font-size: 11px;
  margin-right: 4px;
}
.field input {
  flex: 1;
  min-width: 0;
  width: 0;
  height: 22px;
  padding: 2px 2px 0 0;
  border: 0;
  border-bottom: 1px solid #dadada;
  background: none;
  font: 12px/16px Roboto, sans-serif;
  color: #444;
  text-align: right;
}
.field--select {
  padding-right: 4px;
}
.select {
  flex: 1;
  min-width: 0;
  position: relative;
  display: flex;
  align-items: center;
}
.select select {
  appearance: none;
  width: 100%;
  height: 20px;
  padding: 0 0 0 4px;
  border: 0;
  background: none;
  font: 13px/16px Roboto, sans-serif;
  color: #333;
}
.select .caret {
  position: absolute;
  right: 8px;
  pointer-events: none;
}
.caret {
  width: 8px;
  height: 8px;
}
.loop svg {
  width: 16px;
  height: 16px;
}
.field--current {
  height: 25px;
}
.field--current::before {
  content: "";
  position: absolute;
  left: -10px;
  right: -3px;
  top: -1px;
  height: 27px;
  border: 3px solid #db2a24;
  pointer-events: none;
}
.field--current input {
  border-color: transparent;
  color: #858585;
}
.playbar {
  display: flex;
  align-items: center;
  gap: 14px;
  height: 21px;
  padding: 0 4px 4px 5px;
}
.playbar svg {
  width: 12px;
  height: 12px;
}
.help {
  margin: 6px 0 0 auto;
  width: 11px;
  height: 11px;
  border-radius: 50%;
  background: #999;
  color: #fff;
  font-size: 9px;
  line-height: 11px;
  font-weight: 700;
}
.tree-toggle {
  position: absolute;
  left: 0;
  top: 224px;
  width: 29px;
  height: 31px;
  background: #fff;
}
.tree-toggle svg {
  width: 18px;
  height: 18px;
}
.cube {
  position: absolute;
  right: 0;
  top: 5px;
  width: 154px;
  height: 150px;
}
.view-menu {
  position: absolute;
  right: 13px;
  top: 127px;
  width: 40px;
  height: 25px;
  gap: 7px;
  border-radius: 2px;
  background: #555;
}
.box {
  width: 16px;
  height: 16px;
}
.side-tabs {
  position: absolute;
  right: 0;
  top: 165px;
  width: 28px;
  display: grid;
  gap: 1px;
  background: #c4c4c4;
}
.side-tabs button {
  height: 29px;
  background: #fff;
}
.side-tabs svg {
  width: 19px;
  height: 19px;
}
.scroll-corner {
  position: absolute;
  right: 0;
  bottom: 0;
  width: 4px;
  height: 25px;
  background: #c9c9c9;
}
</style>
